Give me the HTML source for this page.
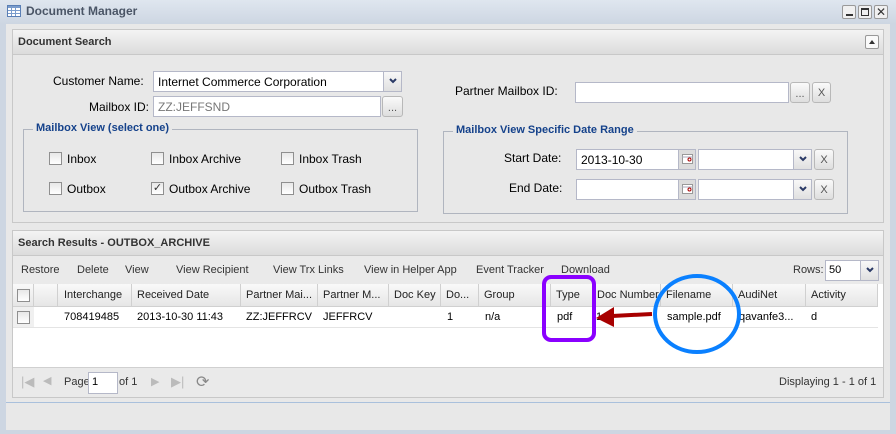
<!DOCTYPE html>
<html><head><meta charset="utf-8"><style>
*{box-sizing:border-box;margin:0;padding:0}
body{width:896px;height:434px;overflow:hidden;background:#cdd6e2;font-family:"Liberation Sans",Arial,sans-serif;font-size:12px;color:#000;position:relative}
.a{position:absolute}
.t{position:absolute;white-space:nowrap}
.hdr{background:linear-gradient(#f4f4f4,#dcdcdc);border-bottom:1px solid #c8c8c8;font-weight:bold;color:#333;font-size:11px}
.inp{position:absolute;background:#fff;border:1px solid #b5b8c8;height:21px}
.btn{position:absolute;background:linear-gradient(#fafafa,#dedede);border:1px solid #b8b8b8;border-radius:3px;height:21px;text-align:center;font-size:11px;color:#555}
.cb{position:absolute;width:13px;height:13px;border:1px solid #8f8f8f;background:linear-gradient(#e8e8e8,#fff)}
.fs{position:absolute;border:1px solid #b0b5bf}
.lg{position:absolute;background:#e8e8e8;color:#15428b;font-weight:bold;font-size:11px;padding:0 3px;top:-8px}
.trig{position:absolute;right:0;top:0;width:18px;height:19px;background:linear-gradient(#f8f8f8,#e0e0e0);border-left:1px solid #b5b8c8}
.chev{position:absolute;left:5px;top:6px}
.col{position:absolute;top:0;height:23px;border-right:1px solid #d0d0d0;padding:5px 0 0 5px;color:#222;white-space:nowrap}
</style></head><body>
<div class="a" style="left:0;top:0;width:896px;height:24px;background:linear-gradient(#dfe6ef,#cdd6e2)"></div>
<svg class="a" style="left:7px;top:5px" width="14" height="12"><rect x="0.5" y="0.5" width="13" height="11" fill="#fff" stroke="#5a7fb5"/><rect x="1" y="1" width="12" height="2" fill="#7a9ccc"/><path d="M1 5.5h12M1 8.5h12M4.5 3v8M8.5 3v8" stroke="#7a9ccc"/></svg>
<div class="t" style="left:26px;top:4px;font-size:12px;font-weight:bold;color:#4a5566">Document Manager</div>
<div class="a" style="left:842px;top:5px;width:14px;height:14px;border:1px solid #999;border-radius:2px;background:#f0f0f0"><div class="a" style="left:3px;top:8px;width:7px;height:2px;background:#333"></div></div>
<div class="a" style="left:858px;top:5px;width:14px;height:14px;border:1px solid #999;border-radius:2px;background:#f0f0f0"><div class="a" style="left:2px;top:2px;width:8px;height:8px;border:1px solid #333;border-top-width:2px"></div></div>
<div class="a" style="left:874px;top:5px;width:14px;height:14px;border:1px solid #999;border-radius:2px;background:#f0f0f0;font-size:12px;line-height:12px;text-align:center;color:#333">✕</div>

<div class="a" style="left:6px;top:24px;width:884px;height:406px;background:#e8e8e8"></div>

<div class="a" style="left:12px;top:29px;width:872px;height:194px;border:1px solid #c8c8c8;background:#e8e8e8"></div>
<div class="a hdr" style="left:13px;top:30px;width:870px;height:25px;padding:6px 0 0 5px">Document Search</div>
<div class="a" style="left:865px;top:35px;width:14px;height:14px;border:1px solid #999;border-radius:2px;background:#fafafa"><div class="a" style="left:3px;top:4px;width:0;height:0;border-left:3px solid transparent;border-right:3px solid transparent;border-bottom:4px solid #333"></div></div>

<div class="t" style="left:53px;top:74px">Customer Name:</div>
<div class="inp" style="left:153px;top:71px;width:249px;padding:3px 4px">Internet Commerce Corporation<div class="trig"><svg class="chev" width="8" height="6"><path d="M1 1l3 3 3-3" stroke="#2a3a66" stroke-width="2" fill="none"/></svg></div></div>
<div class="t" style="left:89px;top:100px">Mailbox ID:</div>
<div class="inp" style="left:153px;top:96px;width:228px;padding:3px 4px;color:#777">ZZ:JEFFSND</div>
<div class="btn" style="left:382px;top:96px;width:21px;line-height:22px">...</div>

<div class="fs" style="left:23px;top:129px;width:395px;height:83px"><div class="lg" style="left:9px">Mailbox View (select one)</div></div>
<div class="cb" style="left:49px;top:152px"></div><div class="t" style="left:67px;top:152px">Inbox</div>
<div class="cb" style="left:151px;top:152px"></div><div class="t" style="left:169px;top:152px">Inbox Archive</div>
<div class="cb" style="left:281px;top:152px"></div><div class="t" style="left:299px;top:152px">Inbox Trash</div>
<div class="cb" style="left:49px;top:182px"></div><div class="t" style="left:67px;top:182px">Outbox</div>
<div class="cb" style="left:151px;top:182px;font-size:11px;line-height:11px;color:#333;text-align:center">✓</div><div class="t" style="left:169px;top:182px">Outbox Archive</div>
<div class="cb" style="left:281px;top:182px"></div><div class="t" style="left:299px;top:182px">Outbox Trash</div>

<div class="t" style="left:455px;top:84px">Partner Mailbox ID:</div>
<div class="inp" style="left:575px;top:82px;width:214px"></div>
<div class="btn" style="left:790px;top:82px;width:20px;line-height:22px">...</div>
<div class="btn" style="left:812px;top:82px;width:19px;line-height:20px">X</div>

<div class="fs" style="left:443px;top:131px;width:405px;height:83px"><div class="lg" style="left:9px">Mailbox View Specific Date Range</div></div>
<div class="t" style="left:504px;top:151px">Start Date:</div>
<div class="inp" style="left:576px;top:149px;width:120px;padding:3px 4px">2013-10-30<div class="trig" style="width:17px;background:#dcdcdc"><svg class="a" style="left:3px;top:4px" width="11" height="10"><rect x="0.5" y="0.5" width="10" height="9" fill="#fff" stroke="#999"/><path d="M0 3h11" stroke="#aab"/><circle cx="7.5" cy="5.5" r="1.5" fill="none" stroke="#a00"/></svg></div></div>
<div class="inp" style="left:698px;top:149px;width:114px"><div class="trig"><svg class="chev" width="8" height="6"><path d="M1 1l3 3 3-3" stroke="#2a3a66" stroke-width="2" fill="none"/></svg></div></div>
<div class="btn" style="left:814px;top:149px;width:20px;line-height:20px">X</div>
<div class="t" style="left:509px;top:181px">End Date:</div>
<div class="inp" style="left:576px;top:179px;width:120px"><div class="trig" style="width:17px;background:#dcdcdc"><svg class="a" style="left:3px;top:4px" width="11" height="10"><rect x="0.5" y="0.5" width="10" height="9" fill="#fff" stroke="#999"/><path d="M0 3h11" stroke="#aab"/><circle cx="7.5" cy="5.5" r="1.5" fill="none" stroke="#a00"/></svg></div></div>
<div class="inp" style="left:698px;top:179px;width:114px"><div class="trig"><svg class="chev" width="8" height="6"><path d="M1 1l3 3 3-3" stroke="#2a3a66" stroke-width="2" fill="none"/></svg></div></div>
<div class="btn" style="left:814px;top:179px;width:20px;line-height:20px">X</div>

<div class="a" style="left:12px;top:230px;width:872px;height:168px;border:1px solid #c8c8c8;background:#eaeaea"></div>
<div class="a hdr" style="left:13px;top:231px;width:870px;height:25px;padding:6px 0 0 5px">Search Results - OUTBOX_ARCHIVE</div>
<div class="a" style="left:13px;top:256px;width:870px;height:28px;background:#eaeaea;color:#333;font-size:11px">
<span class="t" style="left:8px;top:8px">Restore</span><span class="t" style="left:64px;top:8px">Delete</span><span class="t" style="left:112px;top:8px">View</span><span class="t" style="left:163px;top:8px">View Recipient</span><span class="t" style="left:260px;top:8px">View Trx Links</span><span class="t" style="left:351px;top:8px">View in Helper App</span><span class="t" style="left:463px;top:8px">Event Tracker</span><span class="t" style="left:548px;top:8px">Download</span><span class="t" style="left:780px;top:8px">Rows:</span>
</div>
<div class="inp" style="left:825px;top:260px;width:54px;padding:3px 3px;font-size:11px">50<div class="trig"><svg class="chev" width="8" height="6"><path d="M1 1l3 3 3-3" stroke="#2a3a66" stroke-width="2" fill="none"/></svg></div></div>

<div class="a" style="left:13px;top:284px;width:870px;height:84px;background:#fff;border-bottom:1px solid #d0d0d0"></div>
<div class="a" style="left:13px;top:284px;width:865px;height:23px;background:linear-gradient(#f9f9f9,#e6e6e6);border-bottom:1px solid #d0d0d0;font-size:11px">
<div class="col" style="left:0;width:21px"></div><div class="col" style="left:21px;width:24px"></div>
<div class="col" style="left:46px;width:73px">Interchange</div><div class="col" style="left:119px;width:109px">Received Date</div>
<div class="col" style="left:228px;width:77px">Partner Mai...</div><div class="col" style="left:305px;width:71px">Partner M...</div>
<div class="col" style="left:376px;width:52px">Doc Key</div><div class="col" style="left:428px;width:38px">Do...</div>
<div class="col" style="left:466px;width:72px">Group</div><div class="col" style="left:538px;width:44px">Type</div>
<div class="col" style="left:582px;width:66px;padding-left:2px">Doc Number</div><div class="col" style="left:648px;width:72px">Filename</div>
<div class="col" style="left:720px;width:73px">AudiNet</div><div class="col" style="left:793px;width:72px">Activity</div>
</div>
<div class="cb" style="left:17px;top:289px"></div>
<div class="a" style="left:13px;top:307px;width:865px;height:21px;border-bottom:1px solid #e4e4e4;font-size:11px">
<div class="a" style="left:0;top:0;width:21px;height:20px;background:#f0f0f0"></div>
<span class="t" style="left:51px;top:4px">708419485</span><span class="t" style="left:124px;top:4px">2013-10-30 11:43</span>
<span class="t" style="left:233px;top:4px">ZZ:JEFFRCV</span><span class="t" style="left:310px;top:4px">JEFFRCV</span>
<span class="t" style="left:434px;top:4px">1</span><span class="t" style="left:472px;top:4px">n/a</span>
<span class="t" style="left:544px;top:4px">pdf</span><span class="t" style="left:583px;top:4px">1</span>
<span class="t" style="left:654px;top:4px">sample.pdf</span><span class="t" style="left:726px;top:4px">qavanfe3...</span><span class="t" style="left:798px;top:4px">d</span>
</div>
<div class="cb" style="left:17px;top:311px"></div>

<div class="a" style="left:13px;top:369px;width:870px;height:28px;background:#eaeaea;font-size:11px">
<span class="t" style="left:8px;top:5px;color:#bbb;font-size:13px">|◀</span><span class="t" style="left:30px;top:5px;color:#bbb;font-size:11px">◀</span>
<span class="t" style="left:51px;top:7px;color:#333">Page</span>
<div class="inp" style="left:75px;top:3px;width:30px;height:22px;padding:3px 3px">1</div>
<span class="t" style="left:106px;top:7px;color:#333">of 1</span>
<span class="t" style="left:138px;top:6px;color:#bbb">▶</span><span class="t" style="left:158px;top:5px;color:#bbb;font-size:13px">▶|</span>
<span class="t" style="left:183px;top:3px;color:#888;font-size:16px">⟳</span>
<span class="t" style="left:766px;top:7px;color:#333">Displaying 1 - 1 of 1</span>
</div>

<div class="a" style="left:6px;top:402px;width:884px;height:1px;background:#a9c0dc"></div>
<div class="a" style="left:6px;top:403px;width:884px;height:27px;background:#e8e8e8"></div>

<svg class="a" style="left:0;top:0" width="896" height="434">
<rect x="544" y="277" width="50" height="63" rx="7" fill="none" stroke="#8a00ff" stroke-width="4"/>
<ellipse cx="697" cy="314" rx="42" ry="38" fill="none" stroke="#0a80ff" stroke-width="4"/>
<path d="M652 314 L612 316" stroke="#a80000" stroke-width="4"/>
<path d="M596 318 L614 307 L614 327 Z" fill="#a80000"/>
</svg>
</body></html>
